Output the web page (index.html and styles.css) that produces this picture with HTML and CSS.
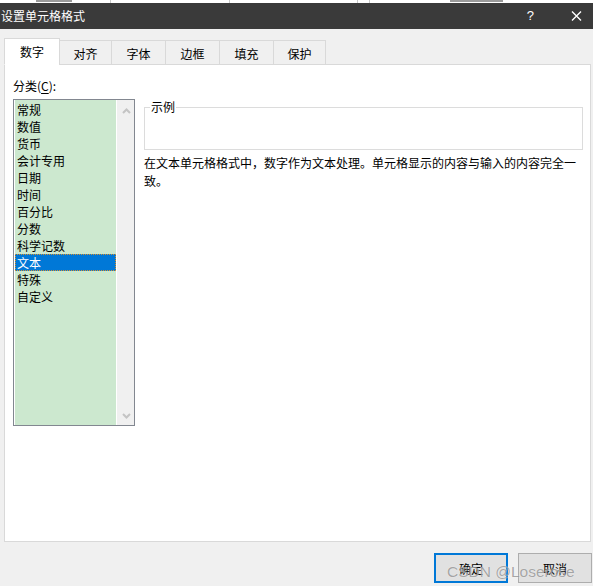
FILE: index.html
```html
<!DOCTYPE html>
<html lang="zh-CN">
<head>
<meta charset="utf-8">
<title>设置单元格格式</title>
<link rel="stylesheet" href="styles.css">
</head>
<body>
  <!-- edge of the worksheet behind the dialog -->
  <div class="sheet-edge">
    <span class="ink w36"></span>
    <span class="grid-line g1"></span>
    <span class="grid-line g2"></span>
    <span class="grid-line g3"></span>
    <span class="grid-line g4"></span>
    <span class="ink w53"></span>
  </div>

  <div class="titlebar">
    <span class="title">设置单元格格式</span>
    <div class="controls">
      <span class="help">?</span>
      <svg class="close" width="11" height="10" viewBox="0 0 11 10" aria-hidden="true">
        <path d="M1 0.5 L10 9.5 M10 0.5 L1 9.5" stroke="#ffffff" stroke-width="1.4" fill="none"/>
      </svg>
    </div>
  </div>

  <div class="dialog">
    <div class="tabs">
      <div class="tab active t1">数字</div>
      <div class="tab t2">对齐</div>
      <div class="tab t3">字体</div>
      <div class="tab t3">边框</div>
      <div class="tab t3">填充</div>
      <div class="tab t2">保护</div>
    </div>

    <div class="panel">
      <div class="category">
        <div class="label">分类(<u>C</u>):</div>
        <div class="listbox">
          <ul class="items">
            <li>常规</li>
            <li>数值</li>
            <li>货币</li>
            <li>会计专用</li>
            <li>日期</li>
            <li>时间</li>
            <li>百分比</li>
            <li>分数</li>
            <li>科学记数</li>
            <li class="selected">文本</li>
            <li>特殊</li>
            <li>自定义</li>
          </ul>
          <div class="scrollbar">
            <svg width="9" height="6" viewBox="0 0 9 6" aria-hidden="true">
              <path d="M1 5 L4.5 1.5 L8 5" stroke="#c4c4c4" stroke-width="2" fill="none"/>
            </svg>
            <svg width="9" height="6" viewBox="0 0 9 6" aria-hidden="true">
              <path d="M1 1 L4.5 4.5 L8 1" stroke="#c4c4c4" stroke-width="2" fill="none"/>
            </svg>
          </div>
        </div>
      </div>

      <div class="detail">
        <fieldset class="sample">
          <legend>示例</legend>
        </fieldset>
        <p class="desc">在文本单元格格式中，数字作为文本处理。单元格显示的内容与输入的内容完全一致。</p>
      </div>
    </div>

    <div class="buttons">
      <button class="btn primary">确定</button>
      <button class="btn">取消</button>
    </div>

    <span class="watermark">CSDN @Loserose</span>
  </div>
</body>
</html>
```

FILE: styles.css
```css
html,
body {
  margin: 0;
  padding: 0;
}

body {
  width: 593px;
  height: 586px;
  overflow: hidden;
  background: #f0f0f0;
  font-family: "Noto Sans CJK SC", "Noto Sans", sans-serif;
  font-size: 12px;
  color: #000;
}

/* worksheet strip */
.sheet-edge {
  height: 3px;
  background: #ffffff;
  display: flex;
  align-items: flex-start;
}

.sheet-edge .ink {
  height: 2px;
  background: #9a9a9a;
}

.sheet-edge .w36 {
  width: 36px;
  margin-left: 36px;
}

.sheet-edge .w53 {
  width: 53px;
  margin-left: 80px;
}

.sheet-edge .grid-line {
  width: 1px;
  height: 3px;
  background: #c8c8c8;
}

.sheet-edge .g1 { margin-left: 38px; }
.sheet-edge .g2 { margin-left: 118px; }
.sheet-edge .g3 { margin-left: 127px; }
.sheet-edge .g4 { margin-left: 11px; }

/* title bar */
.titlebar {
  height: 26px;
  background: #3a3a3a;
  color: #ffffff;
  display: flex;
  align-items: center;
  justify-content: space-between;
  padding: 0 11px 0 1px;
}

.title {
  font-size: 12px;
  line-height: 26px;
}

.controls {
  display: flex;
  align-items: center;
}

.help {
  font-family: "Liberation Sans", sans-serif;
  font-size: 13px;
  line-height: 26px;
  margin-right: 37px;
}

.close {
  display: block;
}

/* dialog body */
.dialog {
  position: relative;
  height: 557px;
}

.tabs {
  display: flex;
  align-items: flex-end;
  height: 27px;
  margin: 9px 0 -1px 4px;
  position: relative;
  z-index: 1;
}

.tab {
  box-sizing: border-box;
  height: 25px;
  border: 1px solid #d9d9d9;
  margin-left: -1px;
  background: #f0f0f0;
  text-align: center;
  padding-top: 2px;
  line-height: 21px;
}

.tab.active {
  height: 27px;
  margin-left: 0;
  padding-top: 0;
  line-height: 26px;
  background: #ffffff;
  border-bottom-color: #ffffff;
}

.t1 { width: 56px; }
.t2 { width: 53px; }
.t3 { width: 55px; }

.panel {
  box-sizing: border-box;
  width: 587px;
  height: 478px;
  margin-left: 4px;
  background: #ffffff;
  border: 1px solid #d9d9d9;
  display: flex;
  align-items: flex-start;
}

/* category list */
.category {
  margin-left: 8px;
  padding-top: 12px;
}

.label {
  line-height: 18px;
  margin-bottom: 4px;
}

.label u {
  text-underline-offset: 2px;
}

.listbox {
  box-sizing: border-box;
  width: 122px;
  height: 327px;
  border: 1px solid #828790;
  padding-left: 1px;
  background: #ffffff;
  display: flex;
}

.items {
  list-style: none;
  margin: 0;
  padding: 1px 0 0;
  width: 101px;
  background: #cce8cf;
}

.items li {
  height: 17px;
  line-height: 17px;
  padding-left: 2px;
  white-space: nowrap;
}

.items li.selected {
  background: #0078d7;
  color: #ffffff;
  outline: 1px dotted #d9912c;
  outline-offset: -1px;
}

.scrollbar {
  width: 17px;
  margin-left: 1px;
  background: #f0f0f0;
  display: flex;
  flex-direction: column;
  align-items: center;
  justify-content: space-between;
  padding: 8px 0 6px;
  box-sizing: border-box;
}

.scrollbar svg {
  display: block;
  margin-left: 1px;
}

/* sample and description */
.detail {
  margin-left: 9px;
  padding-top: 35px;
}

.sample {
  box-sizing: border-box;
  width: 439px;
  height: 50px;
  margin: 0;
  padding: 0;
  border: 1px solid #dcdcdc;
}

.sample legend {
  margin-left: 5px;
  padding: 0 1px;
  font-size: 12px;
  line-height: 14px;
}

.desc {
  width: 439px;
  margin: 4px 0 0;
  line-height: 18px;
}

/* buttons */
.buttons {
  display: flex;
  justify-content: flex-end;
  gap: 10px;
  margin-top: 11px;
  padding-right: 1px;
}

.btn {
  box-sizing: border-box;
  width: 74px;
  height: 30px;
  margin: 0;
  padding: 0;
  background: #e1e1e1;
  border: 1px solid #adadad;
  font-family: "Noto Sans CJK SC", "Noto Sans", sans-serif;
  font-size: 12px;
  color: #000;
}

.btn.primary {
  border: 2px solid #0078d7;
}

.watermark {
  position: absolute;
  left: 447px;
  top: 525px;
  font-family: "Liberation Sans", sans-serif;
  font-size: 15.5px;
  color: rgba(110, 110, 110, 0.6);
  text-shadow: 0 0 1px rgba(255, 255, 255, 0.8);
  white-space: nowrap;
  pointer-events: none;
}
```
